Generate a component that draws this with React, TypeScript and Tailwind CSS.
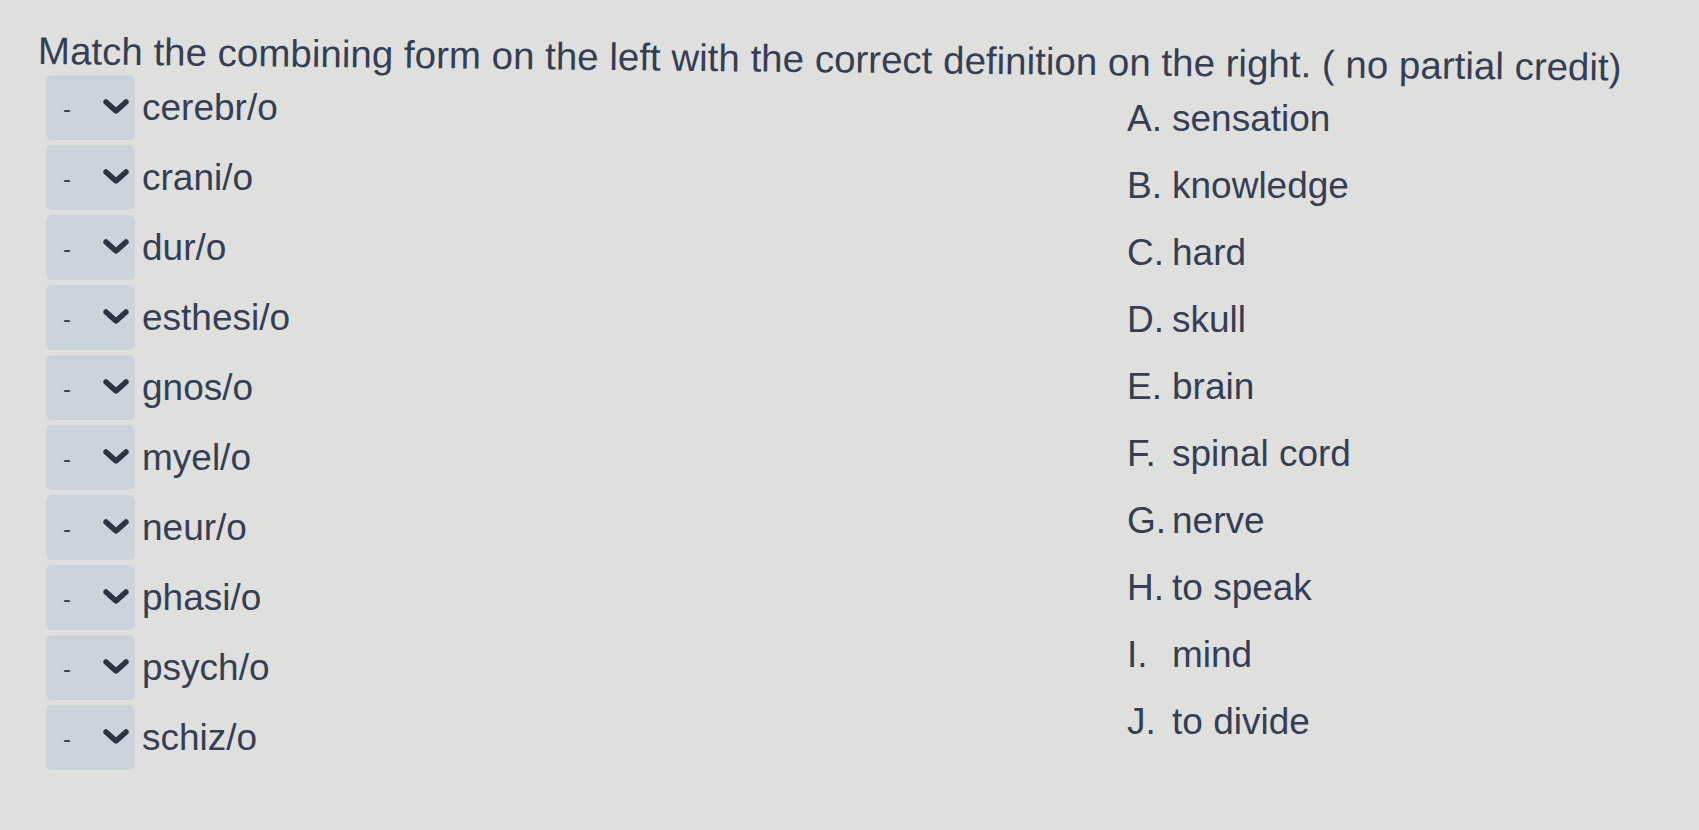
const forms = [
  'cerebr/o',
  'crani/o',
  'dur/o',
  'esthesi/o',
  'gnos/o',
  'myel/o',
  'neur/o',
  'phasi/o',
  'psych/o',
  'schiz/o',
]

const definitions = [
  ['A.', 'sensation'],
  ['B.', 'knowledge'],
  ['C.', 'hard'],
  ['D.', 'skull'],
  ['E.', 'brain'],
  ['F.', 'spinal cord'],
  ['G.', 'nerve'],
  ['H.', 'to speak'],
  ['I.', 'mind'],
  ['J.', 'to divide'],
]

function Chevron() {
  return (
    <svg width="26" height="16" viewBox="0 0 26 16" className="shrink-0">
      <polyline
        points="3,3 13,12 23,3"
        fill="none"
        stroke="#2c3343"
        strokeWidth="5.5"
        strokeLinecap="round"
        strokeLinejoin="round"
      />
    </svg>
  )
}

function MatchSelect() {
  return (
    <div className="flex h-[65px] w-[89px] shrink-0 items-center rounded-md bg-[#cbd3dc] pl-[17px]">
      <span className="w-[40px] pt-[4px] text-[24px] leading-none text-[#3b4459]">-</span>
      <Chevron />
    </div>
  )
}

export default function App() {
  return (
    <div
      className="min-h-screen w-full bg-[#dfe0dd] pl-[38px] pt-[32px] text-[#353e54]"
      style={{ fontFamily: '"Liberation Sans", Arial, sans-serif' }}
    >
      <h1 className="origin-left rotate-[0.6deg] text-[38.5px] leading-none font-normal">
        Match the combining form on the left with the correct definition on the right. ( no partial credit)
      </h1>
      <div className="flex pt-[4px]">
        <div className="flex w-[1089px] flex-col gap-[5px] pl-[8px]">
          {forms.map((f) => (
            <div key={f} className="flex items-center gap-[7px]">
              <MatchSelect />
              <span className="text-[37px] leading-none">{f}</span>
            </div>
          ))}
        </div>
        <div className="flex flex-col pt-[10px]">
          {definitions.map(([letter, text]) => (
            <div key={letter} className="flex h-[67px] items-center text-[37px] leading-none">
              <span className="w-[45px]">{letter}</span>
              <span>{text}</span>
            </div>
          ))}
        </div>
      </div>
    </div>
  )
}
